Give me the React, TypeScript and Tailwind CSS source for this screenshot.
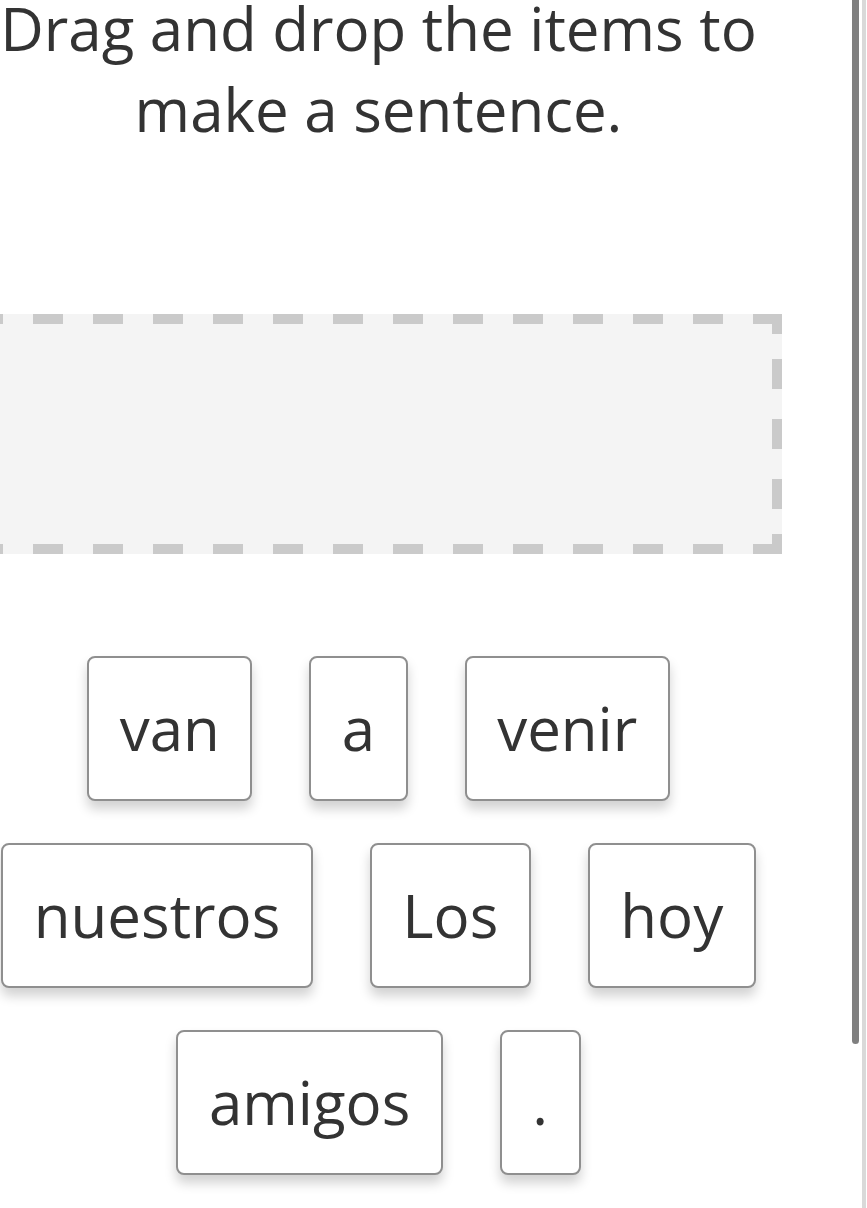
const words = ['van', 'a', 'venir', 'nuestros', 'Los', 'hoy', 'amigos', '.']

function WordTile({ word }: { word: string }) {
  return (
    <div className="cursor-grab select-none rounded-[8px] border-2 border-[#8f8f8f] bg-white px-[30.5px] py-[30px] text-[60px] leading-[81px] shadow-[0_8px_12px_rgba(0,0,0,0.18)]">
      {word}
    </div>
  )
}

export default function App() {
  return (
    <div className="flex h-[1208px] w-full overflow-hidden bg-white font-['Open_Sans',sans-serif] text-[#333333]">
      {/* content */}
      <div className="min-w-0 flex-1 overflow-hidden">
        <div className="ml-[-25px] w-[807px]">
          <h1 className="flex flex-col gap-[24px] text-center text-[60px] font-normal leading-[57px]">
            <span>Drag and drop the items to</span>
            <span>make a sentence.</span>
          </h1>

          {/* drop zone, dashed edges drawn as gradients (30px dash / 30px gap) */}
          <div className="mt-[176px] h-[240px] bg-[#f4f4f4] [background-image:linear-gradient(to_right,#cacaca_30px,transparent_30px),linear-gradient(to_right,#cacaca_30px,transparent_30px),linear-gradient(to_bottom,#cacaca_20px,transparent_20px_45px,#cacaca_45px_75px,transparent_75px_105px,#cacaca_105px_135px,transparent_135px_165px,#cacaca_165px_195px,transparent_195px_220px,#cacaca_220px)] [background-size:60px_10px,60px_10px,10px_100%] [background-position:58px_0,58px_100%,100%_0] [background-repeat:repeat-x,repeat-x,no-repeat]" />

          {/* word bank */}
          <div className="mt-[102px] flex flex-wrap justify-center gap-x-[57px] gap-y-[42px]">
            {words.map((w, i) => (
              <WordTile key={i} word={w} />
            ))}
          </div>
        </div>
      </div>

      {/* scrollbar */}
      <div className="flex w-[15px] shrink-0">
        <div className="h-[1044px] w-[7px] rounded-b-[4px] bg-[#7f7f7f]" />
        <div className="w-[3px]" />
        <div className="h-full w-[4px] bg-[#d9d9d9]" />
      </div>
    </div>
  )
}
